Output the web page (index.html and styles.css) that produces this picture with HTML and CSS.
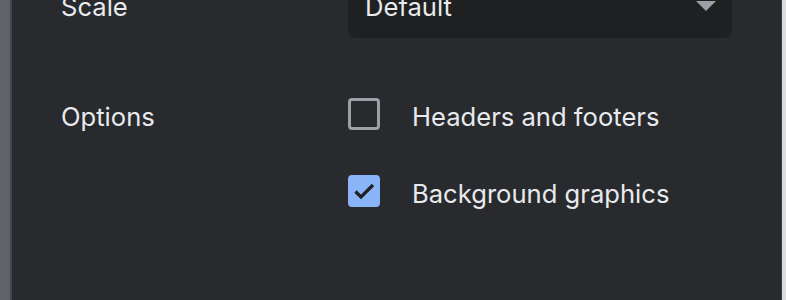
FILE: index.html
```html
<!DOCTYPE html>
<html>
<head>
<meta charset="utf-8">
<link rel="stylesheet" href="styles.css">
</head>
<body>
<div class="frame">
  <div class="side"></div>
  <div class="side-edge"></div>
  <div class="panel">
    <div class="row row-scale">
      <div class="label label-scale">Scale</div>
      <div class="control">
        <div class="select">
          <span class="select-text">Default</span>
          <span class="arrow"></span>
        </div>
      </div>
    </div>
    <div class="row row-options">
      <div class="label label-options">Options</div>
      <div class="control checks">
        <div class="check-row">
          <span class="box"></span>
          <span class="check-label">Headers and footers</span>
        </div>
        <div class="check-row">
          <span class="box checked">
            <svg viewBox="0 0 32 32" width="32" height="32"><path d="M7.5 16.5l5.5 5.5 12-12" fill="none" stroke="#202124" stroke-width="3.2"/></svg>
          </span>
          <span class="check-label">Background graphics</span>
        </div>
      </div>
    </div>
  </div>
  <div class="right-edge"></div>
  <div class="right"></div>
</div>
</body>
</html>
```
FILE: styles.css
```css
html, body {
  margin: 0;
  padding: 0;
  height: 300px;
  overflow: hidden;
  background: #292a2d;
}
.frame {
  display: flex;
  height: 300px;
  font-family: Inter, "Noto Sans", sans-serif;
  color: #e8eaed;
}
.side {
  width: 10px;
  background: #5f6368;
}
.side-edge {
  width: 2px;
  background: #45474b;
}
.panel {
  flex: 1;
  background: #292a2d;
  display: flex;
  flex-direction: column;
}
.right-edge {
  width: 1px;
  background: #3c3d40;
}
.right {
  width: 4px;
  background: #dcdcdc;
}
.row {
  display: flex;
  padding-left: 49px;
}
.label {
  width: 287px;
  font-size: 25.6px;
  line-height: 32px;
}
.control {
  width: 384px;
}
.row-scale {
  margin-top: -18px;
  align-items: center;
}
.label-scale {
  padding-bottom: 6px;
}
.select {
  height: 56px;
  box-sizing: border-box;
  background: #1f2022;
  border-radius: 8px;
  display: flex;
  align-items: center;
  justify-content: space-between;
  padding: 0 16px 6px 17px;
  font-size: 25.6px;
  line-height: 32px;
}
.arrow {
  width: 0;
  height: 0;
  border-left: 10px solid transparent;
  border-right: 10px solid transparent;
  border-top: 10px solid #9aa0a6;
  margin-bottom: 2px;
}
.row-options {
  margin-top: 60px;
}
.label-options {
  padding-top: 3px;
}
.checks {
  display: flex;
  flex-direction: column;
  gap: 45px;
}
.check-row {
  display: flex;
  align-items: center;
  height: 32px;
}
.box {
  width: 32px;
  height: 32px;
  box-sizing: border-box;
  border: 3px solid #9aa0a6;
  border-radius: 4px;
  margin-right: 32px;
  flex: none;
}
.box.checked {
  border: none;
  background: #8ab4f8;
}
.box svg {
  display: block;
}
.check-label {
  font-size: 25.6px;
  line-height: 32px;
  padding-top: 6px;
}
```
